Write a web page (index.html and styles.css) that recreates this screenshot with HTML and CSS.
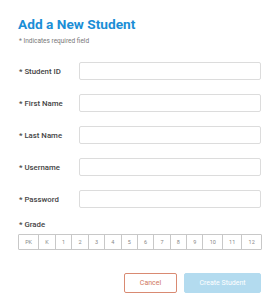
FILE: index.html
```html
<!DOCTYPE html>
<html>
<head>
<meta charset="utf-8">
<link rel="stylesheet" href="styles.css">
</head>
<body>
<div class="page">
  <h1 class="title">Add a New Student</h1>
  <p class="note">* Indicates required field</p>
  <form class="form">
    <div class="row"><label class="label">* Student ID</label><input class="input" type="text"></div>
    <div class="row"><label class="label">* First Name</label><input class="input" type="text"></div>
    <div class="row"><label class="label">* Last Name</label><input class="input" type="text"></div>
    <div class="row"><label class="label">* Username</label><input class="input" type="text"></div>
    <div class="row"><label class="label">* Password</label><input class="input" type="password"></div>
    <div class="grade">
      <div class="label">* Grade</div>
      <div class="grades">
        <span class="g">PK</span><span class="g">K</span><span class="g">1</span><span class="g">2</span><span class="g">3</span><span class="g">4</span><span class="g">5</span><span class="g">6</span><span class="g">7</span><span class="g">8</span><span class="g">9</span><span class="g">10</span><span class="g">11</span><span class="g">12</span>
      </div>
    </div>
    <div class="actions">
      <button type="button" class="btn cancel">Cancel</button>
      <button type="button" class="btn create">Create Student</button>
    </div>
  </form>
</div>
</body>
</html>
```
FILE: styles.css
```css
* { box-sizing: border-box; }
html, body { margin: 0; padding: 0; background: #fff; }
body { font-family: Roboto, "Noto Sans", "Liberation Sans", sans-serif; color: #444; }
.page { padding: 14px 14px 0 18px; width: 275px; }
.title { margin: 0; font-size: 13.7px; line-height: 20px; font-weight: 700; color: #1b8ed6; }
.note { margin: 2px 0 0 1px; font-size: 6.5px; line-height: 10px; color: #777; }
.form { margin-top: 16px; display: flex; flex-direction: column; }
.row { display: flex; align-items: center; height: 18px; margin-bottom: 14px; }
.label { flex: 0 0 61px; width: 61px; padding-left: 1px; font-size: 7.8px; font-weight: 500; color: #444; }
.input { flex: 1 1 0; min-width: 0; height: 18px; border: 1px solid #dcdcdc; border-radius: 2px; margin: 0; padding: 0 4px; background: #fff; outline: none; }
.grade { margin-top: -2px; }
.grade .label { line-height: 10px; margin-bottom: 4px; }
.grades { display: flex; width: 244px; height: 16px; }
.g { flex: 1 1 auto; display: flex; align-items: center; justify-content: center; border: 1px solid #c8c8c8; margin-left: -1px; font-size: 5.5px; color: #888; padding: 0 4px; }
.g:first-child { margin-left: 0; border-radius: 1px 0 0 1px; }
.g:last-child { border-radius: 0 1px 1px 0; }
.actions { display: flex; justify-content: flex-end; gap: 7px; margin-top: 23px; width: 243px; }
.btn { height: 20px; margin: 0; font-family: inherit; font-size: 7px; border-radius: 2px; padding: 0; cursor: pointer; }
.cancel { width: 53px; background: #fff; border: 1px solid #d98a72; color: #d0775d; }
.create { width: 77px; background: #b3dbef; border: 1px solid #b3dbef; color: #fff; }
```
